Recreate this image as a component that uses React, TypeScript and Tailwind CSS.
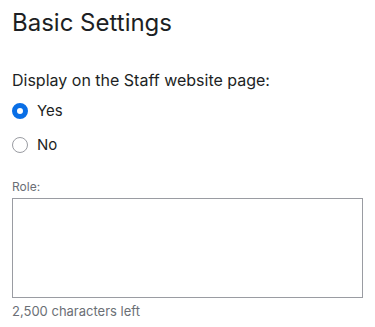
export default function App() {
  return (
    <div className="px-3 pt-[7px] bg-white text-[#1f2328]" style={{ fontFamily: 'Inter, "Noto Sans", sans-serif' }}>
      <h1 className="text-[24px] leading-[32px] font-normal text-[#1d1f24]">Basic Settings</h1>
      <p className="mt-[30px] text-[16px] leading-[22px] text-[#1d1f24]">Display on the Staff website page:</p>
      <div className="mt-[10px] flex flex-col gap-[14px]">
        <label className="flex items-center gap-[9px] text-[15px] leading-[20px] text-[#1d1f24]">
          <span className="w-[16px] h-[16px] rounded-full border-[5px] border-[#0a6fe6] bg-white" />
          Yes
        </label>
        <label className="flex items-center gap-[9px] text-[15px] leading-[20px] text-[#1d1f24]">
          <span className="w-[16px] h-[16px] rounded-full border border-[#9a9ca2] bg-white" />
          No
        </label>
      </div>
      <div className="mt-[24px] text-[12px] leading-[16px] text-[#6b6f76]">Role:</div>
      <div className="mt-[3px] h-[100px] border border-[#9a9ca2]" />
      <div className="mt-[4px] text-[13px] leading-[18px] text-[#6b6f76]">2,500 characters left</div>
    </div>
  );
}
